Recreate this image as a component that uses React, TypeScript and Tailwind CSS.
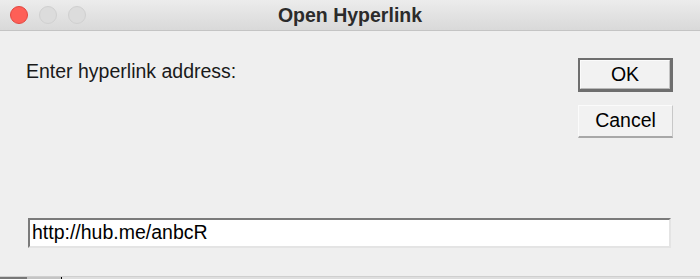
import React from 'react'

const font = { fontFamily: '"Liberation Sans", Arial, sans-serif' }

function TrafficLights() {
  return (
    <div className="flex items-center gap-[11px] pl-[10px]">
      <div className="w-[18px] h-[18px] rounded-full bg-[#fe5f57] border border-[#e2463f]" />
      <div className="w-[18px] h-[18px] rounded-full bg-[#dcdcdc] border border-[#d0d0d0]" />
      <div className="w-[18px] h-[18px] rounded-full bg-[#dcdcdc] border border-[#d0d0d0]" />
    </div>
  )
}

function Button({ label, isDefault }: { label: string; isDefault?: boolean }) {
  if (isDefault) {
    return (
      <div className="w-[95px] h-[34px] border-2 border-r-[3px] border-b-[3px] border-[#6e6e6e]">
        <div className="w-full h-full bg-[#f2f2f2] border border-[#fbfbfb] border-b-[#b8b8b8] border-r-[#c4c4c4] flex items-center justify-center text-[19.5px] text-black leading-none">
          {label}
        </div>
      </div>
    )
  }
  return (
    <div className="w-[95px] h-[33px] bg-[#f2f2f2] border border-[#fbfbfb] border-b-2 border-b-[#a8a8a8] border-r-[#c8c8c8] flex items-center justify-center text-[19.5px] text-black leading-none">
      {label}
    </div>
  )
}

export default function App() {
  return (
    <div className="w-[700px] h-[279px] flex flex-col bg-[#efefef] overflow-hidden" style={font}>
      <div className="relative h-[31px] flex items-center bg-gradient-to-b from-[#ececec] to-[#d9d9d9] border-b border-[#c4c4c4]">
        <TrafficLights />
        <div className="absolute inset-0 flex items-center justify-center text-[19.5px] font-bold text-[#2b2b2b] pt-[1px]">
          Open Hyperlink
        </div>
      </div>

      <div className="flex-1 flex flex-col pt-[27px] pb-[28px]">
        <div className="flex justify-between pl-[26px] pr-[27px]">
          <div className="pt-[2px] text-[19.5px] leading-[22px] text-[#1a1a1a]">Enter hyperlink address:</div>
          <div className="flex flex-col gap-[13px]">
            <Button label="OK" isDefault />
            <Button label="Cancel" />
          </div>
        </div>

        <div className="mt-auto ml-[28px] mr-[29px] h-[30px] bg-white border-2 border-[#7a7a7a] border-r-[#e4e4e4] border-b-[#e4e4e4] flex items-center px-[2px] text-[19.5px] text-black">
          http://hub.me/anbcR
        </div>
      </div>

      <div className="h-[3px] border-t border-[#cfcfcf] flex">
        <div className="w-[27px] bg-[#777777]" />
        <div className="w-[34px] bg-[#c4c4c4]" />
        <div className="w-[1px] bg-black" />
        <div className="flex-1 bg-[#dedede]" />
      </div>
    </div>
  )
}
